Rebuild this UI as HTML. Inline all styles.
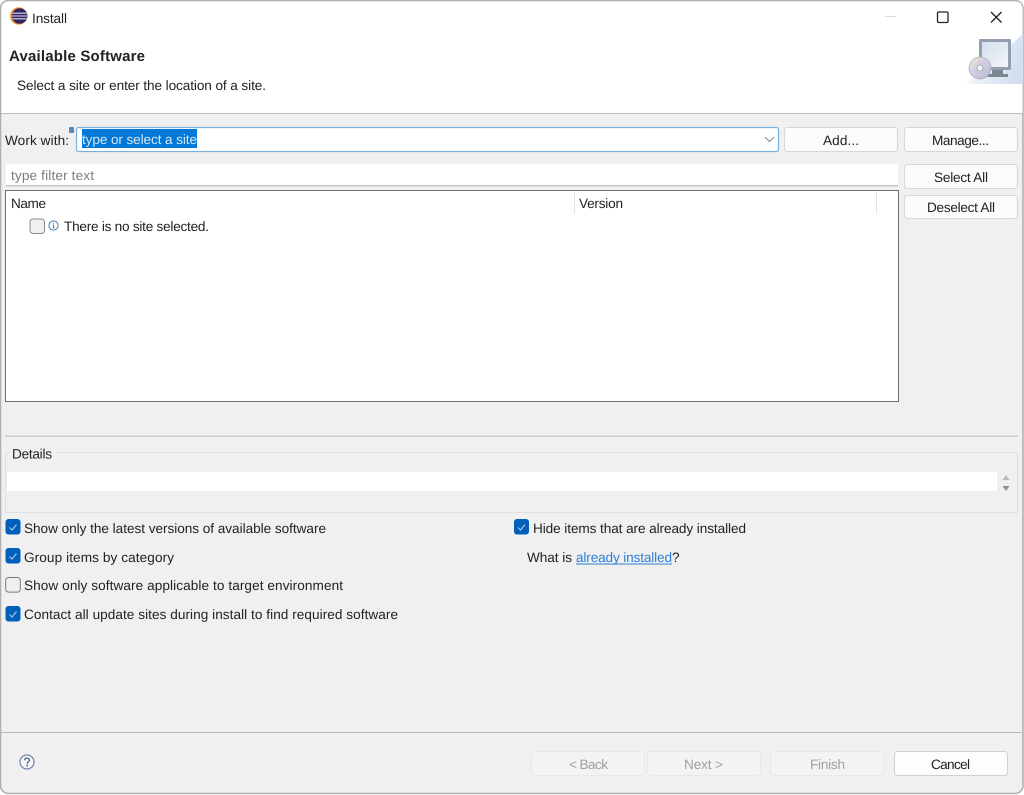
<!DOCTYPE html>
<html><head><meta charset="utf-8"><title>Install</title>
<style>
html,body{margin:0;padding:0;width:1024px;height:795px;overflow:hidden;background:#fff}
svg{display:block;position:absolute;left:0;top:0;filter:blur(.3px)}
text{font-family:"Liberation Sans",sans-serif;font-size:13.6px;fill:#222;text-rendering:geometricPrecision}
.d{fill:#a0a0a0}
.b{fill:#fbfbfb;stroke:#d6d6d6;stroke-width:1}
.o{fill:#f3f3f3;stroke:#e8e8e8;stroke-width:1}
</style></head><body>
<svg width="1024" height="795" viewBox="0 0 1024 795" xmlns="http://www.w3.org/2000/svg">
<rect width="1024" height="795" fill="#fff"/>
<rect x="0.5" y="0.5" width="1022.5" height="793" rx="8" fill="#f0f0f0" stroke="#b0b0b0" stroke-width="1.6"/>
<path d="M1.5 113V9Q1.5 1.5 9 1.5H1015Q1022.5 1.5 1022.5 9V113Z" fill="#fff"/>
<rect x="1" y="113" width="1022" height="1" fill="#bdbdbd"/>

<!-- Title bar -->
<defs><clipPath id="ec"><circle cx="19.5" cy="16" r="7.6"/></clipPath></defs>
<circle cx="18.7" cy="16" r="8.7" fill="#f29a35"/>
<circle cx="19.6" cy="16" r="7.8" fill="#2f2560"/>
<g clip-path="url(#ec)"><path d="M11 13.2H28.5M11 16H28.5M11 18.8H28.5" stroke="#e4e2f0" stroke-width="1.1"/></g>
<text x="32" y="23" textLength="35" lengthAdjust="spacing">Install</text>
<rect x="885" y="16" width="11" height="1" fill="#dcdcdc"/>
<rect x="937.5" y="12" width="10.5" height="10.5" rx="1.2" fill="none" stroke="#222" stroke-width="1.3"/>
<path d="M991 12L1001.5 22.5M1001.5 12L991 22.5" stroke="#222" stroke-width="1.3" fill="none"/>

<!-- Banner -->
<text x="9" y="61" textLength="136" lengthAdjust="spacing" style="font-weight:bold;font-size:15px" fill="#111">Available Software</text>
<text x="17" y="90" textLength="249" lengthAdjust="spacing">Select a site or enter the location of a site.</text>
<defs><linearGradient id="bg" x1="0" y1="0" x2="1" y2="0.3"><stop offset="0" stop-color="#fff"/><stop offset="1" stop-color="#d3deef"/></linearGradient>
<linearGradient id="sc" x1="0" y1="0" x2="1" y2="1"><stop offset="0" stop-color="#d6dfeb"/><stop offset="1" stop-color="#f2f5f9"/></linearGradient>
<linearGradient id="cd" x1="0" y1="0" x2="1" y2="1"><stop offset="0" stop-color="#eef0c8"/><stop offset=".45" stop-color="#d2cbe6"/><stop offset="1" stop-color="#b4bcc8"/></linearGradient></defs>
<path d="M966 84L1023 34V84Z" fill="url(#bg)"/>
<rect x="979" y="39" width="32" height="31" rx="1" fill="#939fae"/>
<rect x="982" y="42" width="26" height="25" fill="url(#sc)"/>
<path d="M992 70H1003V74H1008V77H985V74H992Z" fill="#7a8692"/>
<circle cx="980" cy="68" r="11" fill="url(#cd)" stroke="#aab2bb" stroke-width=".8"/>
<circle cx="980" cy="68" r="3" fill="#f4f4f4" stroke="#9aa3ad" stroke-width=".8"/>

<!-- Work with -->
<text x="5" y="145" textLength="64" lengthAdjust="spacing">Work with:</text>
<rect x="69" y="127" width="5" height="6" rx="1" fill="#5b87b3"/>
<rect x="76.5" y="127.5" width="702" height="24" rx="2" fill="#fff" stroke="#7ab2dd" stroke-width="1.2"/>
<rect x="82" y="129" width="115" height="19" fill="#0078d7"/>
<text x="82" y="144" textLength="115" lengthAdjust="spacing" style="fill:#d5e6f6">type or select a site</text>
<path d="M765 137L769.5 141.5L774 137" fill="none" stroke="#8a8a8a" stroke-width="1"/>
<rect class="b" x="784.5" y="127.5" width="113" height="24" rx="3"/>
<text x="823" y="145" textLength="36" lengthAdjust="spacing">Add...</text>
<rect class="b" x="904.5" y="127.5" width="113" height="24" rx="3"/>
<text x="932" y="145" textLength="57" lengthAdjust="spacing">Manage...</text>

<!-- Filter -->
<rect x="6" y="164" width="892" height="22" fill="#fff"/>
<rect x="6" y="185" width="892" height="1.5" fill="#c4c4c4"/>
<text x="11" y="180" textLength="83" lengthAdjust="spacing" style="fill:#7c7c7c">type filter text</text>
<rect class="b" x="904.5" y="164.5" width="113" height="24" rx="3"/>
<text x="934" y="182" textLength="54" lengthAdjust="spacing">Select All</text>
<rect class="b" x="904.5" y="195.5" width="113" height="23" rx="3"/>
<text x="927" y="212" textLength="68" lengthAdjust="spacing">Deselect All</text>

<!-- Tree -->
<rect x="5.5" y="190.5" width="893" height="211" fill="#fff" stroke="#6f6f6f" stroke-width="1"/>
<text x="11" y="208" textLength="35" lengthAdjust="spacing">Name</text>
<text x="579" y="208" textLength="44" lengthAdjust="spacing">Version</text>
<rect x="574" y="192" width="1" height="22" fill="#e4e4e4"/>
<rect x="876" y="192" width="1" height="22" fill="#e4e4e4"/>
<rect x="30" y="219" width="14.5" height="14.5" rx="3" fill="#f0f0f0" stroke="#8a8a8a" stroke-width="1"/>
<circle cx="53.5" cy="225.5" r="4.6" fill="#fff" stroke="#3f7fc0" stroke-width="1"/>
<path d="M53.5 224.5V228.5M53.5 222.6V223.6" stroke="#3f7fc0" stroke-width="1.1"/>
<text x="64" y="231" textLength="145" lengthAdjust="spacing">There is no site selected.</text>

<!-- Details -->
<rect x="5" y="435.5" width="1013" height="1.5" fill="#cccccc"/>
<rect x="5.5" y="452.5" width="1012" height="60" fill="none" stroke="#e0e0e0" stroke-width="1"/>
<rect x="10" y="448" width="46" height="10" fill="#f0f0f0"/>
<text x="12" y="458.5" textLength="40" lengthAdjust="spacing">Details</text>
<rect x="7" y="472" width="990" height="19" fill="#fff"/>
<path d="M1006 475L1009.5 480H1002.5Z" fill="#b8b8b8"/>
<path d="M1006 491L1009.5 486H1002.5Z" fill="#8f8f8f"/>

<!-- Checkboxes -->
<g fill="#005fb8">
<rect x="5.5" y="519" width="15" height="15.5" rx="3"/>
<rect x="5.5" y="548" width="15" height="15.5" rx="3"/>
<rect x="5.5" y="606" width="15" height="15.5" rx="3"/>
<rect x="514" y="519" width="15" height="15.5" rx="3"/>
</g>
<rect x="5.7" y="577.5" width="14.6" height="14.6" rx="3" fill="#f0f0f0" stroke="#7a7a7a" stroke-width="1"/>
<g fill="none" stroke="#a9cdeb" stroke-width="1.1">
<path d="M9.5 527.5L12 530L16.5 524.5"/>
<path d="M9.5 556.5L12 559L16.5 553.5"/>
<path d="M9.5 614.5L12 617L16.5 611.5"/>
<path d="M518 527.5L520.5 530L525 524.5"/>
</g>
<text x="24" y="533" textLength="302" lengthAdjust="spacing">Show only the latest versions of available software</text>
<text x="24" y="562" textLength="150" lengthAdjust="spacing">Group items by category</text>
<text x="24" y="590" textLength="319" lengthAdjust="spacing">Show only software applicable to target environment</text>
<text x="24" y="619" textLength="374" lengthAdjust="spacing">Contact all update sites during install to find required software</text>
<text x="533" y="533" textLength="213" lengthAdjust="spacing">Hide items that are already installed</text>
<text x="527" y="562" textLength="45" lengthAdjust="spacing">What is</text>
<text x="576" y="562" textLength="96" lengthAdjust="spacing" style="fill:#2b7fd6">already installed</text>
<rect x="576" y="563.5" width="96" height="1" fill="#2b7fd6"/>
<text x="672" y="562" textLength="6" lengthAdjust="spacing">?</text>

<!-- Footer -->
<rect x="1" y="732" width="1022" height="1" fill="#b8b8b8"/>
<circle cx="27" cy="762" r="7" fill="#f4f6fa" stroke="#6f84a6" stroke-width="1.2"/>
<path d="M24.6 760.3C24.8 758.6 25.8 758 27 758C28.4 758 29.5 758.9 29.5 760.1C29.5 761.8 27.2 761.8 27.2 763.8" fill="none" stroke="#4a5f85" stroke-width="1.3"/>
<rect x="26.4" y="764.8" width="1.6" height="1.6" fill="#4a5f85"/>
<rect class="o" x="531.5" y="751.5" width="113" height="24" rx="3"/>
<text class="d" x="569" y="769" textLength="39" lengthAdjust="spacing">&lt; Back</text>
<rect class="o" x="647.5" y="751.5" width="113" height="24" rx="3"/>
<text class="d" x="684" y="769" textLength="39" lengthAdjust="spacing">Next &gt;</text>
<rect class="o" x="770.5" y="751.5" width="113.5" height="24" rx="3"/>
<text class="d" x="810" y="769" textLength="35" lengthAdjust="spacing">Finish</text>
<rect x="894.5" y="751.5" width="113" height="24" rx="3" fill="#fdfdfd" stroke="#d0d0d0" stroke-width="1"/>
<text x="931" y="769" textLength="39" lengthAdjust="spacing">Cancel</text>
</svg>
</body></html>
